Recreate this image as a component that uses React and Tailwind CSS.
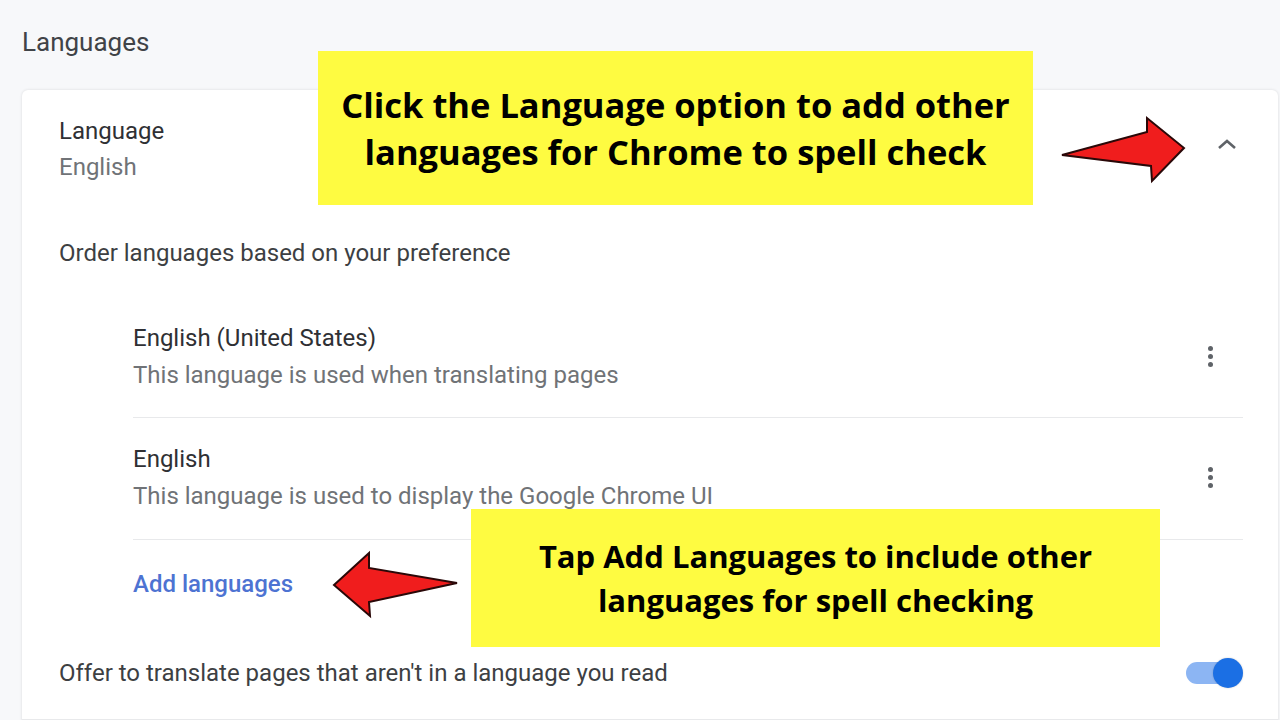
import React from 'react';

const LANGS = [
  { name: 'English (United States)', desc: 'This language is used when translating pages' },
  { name: 'English', desc: 'This language is used to display the Google Chrome UI' },
];

const Kebab = () => (
  <div className="w-10 h-10 mr-[13px] flex flex-col items-center justify-center gap-[3px]">
    <span className="w-[5px] h-[5px] rounded-full bg-[#5f6368]" />
    <span className="w-[5px] h-[5px] rounded-full bg-[#5f6368]" />
    <span className="w-[5px] h-[5px] rounded-full bg-[#5f6368]" />
  </div>
);

const Callout = ({ className, children }) => (
  <div
    className={`absolute bg-[#fefb41] flex items-center justify-center text-center font-bold text-black ${className}`}
    style={{ fontFamily: '"Open Sans", "Liberation Sans", sans-serif' }}
  >
    {children}
  </div>
);

export default function App() {
  return (
    <div
      className="relative w-[1280px] h-[720px] overflow-hidden bg-[#f7f8fa] text-[24px]"
      style={{ fontFamily: 'Roboto, "Liberation Sans", sans-serif' }}
    >
      <div className="pl-[22px] pt-[24px] h-[90px] text-[#404347] text-[26px] leading-[36px]">Languages</div>

      <div className="ml-[22px] mr-[2px] bg-white rounded-[6px] shadow-[0_0_3px_rgba(0,0,0,0.12)]">
        {/* header row */}
        <div className="flex justify-between pl-[37px] pt-[23px] h-[95px]">
          <div className="leading-[36px]">
            <div className="text-[#2f3034]">Language</div>
            <div className="text-[#707377]">English</div>
          </div>
          <div className="mt-[24px] mr-[40px]">
            <svg width="22" height="14" viewBox="0 0 22 14">
              <path d="M3 11 L11 4 L19 11" fill="none" stroke="#5f6368" strokeWidth="2.6" />
            </svg>
          </div>
        </div>

        <div className="pl-[37px] mt-[50px] leading-[36px] text-[#3d3f43]">Order languages based on your preference</div>

        <div className="ml-[111px] mr-[35px] mt-[49px]">
          {LANGS.map((l, i) => (
            <div key={i} className={`flex items-center justify-between ${i === 0 ? 'pb-[24px]' : 'pt-[23px] pb-[25px]'} border-b border-[#e8e9eb]`}>
              <div className="leading-[36.5px]">
                <div className="text-[#2f3034]">{l.name}</div>
                <div className="text-[#707377]">{l.desc}</div>
              </div>
              <Kebab />
            </div>
          ))}
          <div className="pt-[26px] h-[87px] leading-[36px] text-[#4d73d2] font-medium">Add languages</div>
        </div>

        <div className="flex items-center justify-between pl-[37px] pr-[35px] h-[92px]">
          <div className="text-[#3d3f43] leading-[36px]">Offer to translate pages that aren't in a language you read</div>
          <div className="relative w-[57px] h-[30px] flex items-center">
            <div className="w-[48px] h-[22px] rounded-full bg-[#8cb5f3]" />
            <div className="absolute right-0 w-[30px] h-[30px] rounded-full bg-[#1b6fe4] shadow-[0_0_2px_rgba(0,0,0,0.2)]" />
          </div>
        </div>
        <div className="h-[60px] border-t border-[#e8e9eb]" />
      </div>

      <Callout className="left-[318px] top-[51px] w-[715px] h-[154px] text-[34.5px] leading-[47px]">
        <div>
          Click the Language option to add other
          <br />
          languages for Chrome to spell check
        </div>
      </Callout>

      <Callout className="left-[471px] top-[509px] w-[689px] h-[138px] text-[31px] leading-[44px]">
        <div>
          Tap Add Languages to include other
          <br />
          languages for spell checking
        </div>
      </Callout>

      <svg className="absolute inset-0 pointer-events-none" width="1280" height="720" viewBox="0 0 1280 720">
        <polygon
          points="1062,155 1147,132 1147,118 1184,148 1152,181 1151,166"
          fill="#f01d1d"
          stroke="#2a0808"
          strokeWidth="2"
          strokeLinejoin="miter"
        />
        <polygon
          points="334,585 369,553 369,568 457,583 369,602 370,616"
          fill="#f01d1d"
          stroke="#2a0808"
          strokeWidth="2"
          strokeLinejoin="miter"
        />
      </svg>
    </div>
  );
}
